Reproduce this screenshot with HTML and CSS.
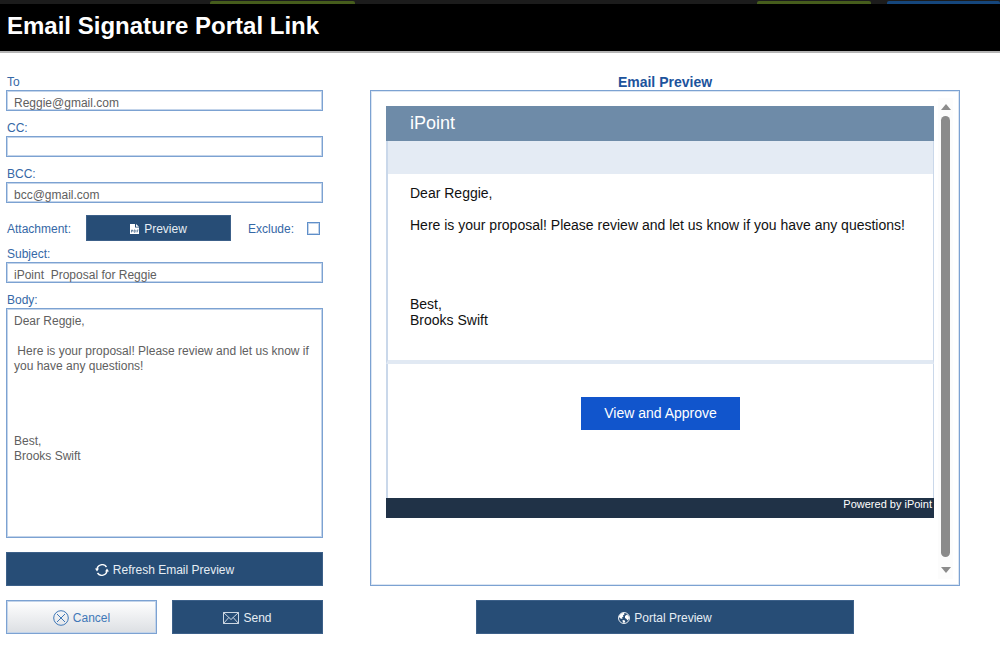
FILE: index.html
```html
<!DOCTYPE html>
<html lang="en">
<head>
    <meta charset="UTF-8">
    <meta name="viewport" content="width=device-width, initial-scale=1.0">
    <title>Email Signature Portal Link</title>

    <link rel="stylesheet" href="styles.css">
</head>
<body>
    <div class="tabs">
        <span class="tab green"></span>
        <span class="tab green"></span>
        <span class="tab blue"></span>
    </div>
    <header class="header">
        <h1>Email Signature Portal Link</h1>
    </header>

    <main class="container">
        <form class="form">
            <div class="field">
                <label for="to">To</label>
                <input type="text" id="to" value="Reggie@gmail.com">
            </div>
            <div class="field">
                <label for="cc">CC:</label>
                <input type="text" id="cc">
            </div>
            <div class="field">
                <label for="bcc">BCC:</label>
                <input type="text" id="bcc" value="bcc@gmail.com">
            </div>

            <div class="attachment">
                <label for="attachment">Attachment:</label>
                <button type="button" id="attachment" class="btn">
                    <svg class="icon-file" viewBox="0 0 10 12">
                        <path fill="#fff" d="M0 1h5v3.500h4V11H0z"/>
                        <path fill="#fff" d="M6 1l3 2.800H6z"/>
                        <path stroke="#274d76" stroke-width=".6" fill="none" d="M1.500 9.500V7h1v1.200h-1M4 7v2.200h1.200V7zM7 9.500V7h1.500M7 8.200h1"/>
                    </svg>
                    Preview
                </button>
                <label for="exclude">Exclude:</label>
                <input type="checkbox" id="exclude">
            </div>

            <div class="field">
                <label for="subject">Subject:</label>
                <input type="text" id="subject" value="iPoint  Proposal for Reggie">
            </div>
            <div class="field">
                <label for="body">Body:</label>
                <textarea id="body">Dear Reggie,

 Here is your proposal! Please review and let us know if you have any questions!




Best,
Brooks Swift</textarea>
            </div>

            <div class="actions">
                <button type="button" class="btn wide">
                    <svg class="icon-refresh" viewBox="0 0 14 12">
                        <path fill="none" stroke="#fff" stroke-width="1.400" d="M2 5.500A5.200 5.200 0 0 1 11.500 3M12 6.500A5.200 5.200 0 0 1 2.500 9"/>
                        <path fill="#fff" d="M0 4.500h4L2 7.500zM14 7.500h-4l2-3z"/>
                    </svg>
                    Refresh Email Preview
                </button>
                <button type="button" class="btn cancel">
                    <svg class="icon-cancel" viewBox="0 0 16 16">
                        <circle cx="8" cy="8" r="7.300" fill="none" stroke="#3f78b8"/>
                        <path stroke="#3f78b8" d="M4 4l8 8M12 4l-8 8"/>
                    </svg>
                    Cancel
                </button>
                <button type="submit" class="btn">
                    <svg class="icon-mail" viewBox="0 0 16 12">
                        <path fill="none" stroke="#dfe7ef" stroke-width=".9" d="M.5.5h15v11H.5zL8 7.500 15.500.5M.5 11.500l5.300-6M15.500 11.500l-5.300-6"/>
                    </svg>
                    Send
                </button>
            </div>
        </form>

        <section class="preview">
            <h2>Email Preview</h2>
            <div class="panel">
                <article class="email">
                    <div class="email-header">iPoint</div>
                    <div class="email-band"></div>
                    <div class="email-body">
                        <p>Dear Reggie,</p>
                        <p>Here is your proposal! Please review and let us know if you have any questions!</p>
                        <p class="sign">Best,<br>Brooks Swift</p>
                    </div>
                    <div class="email-action">
                        <a href="#">View and Approve</a>
                    </div>
                    <div class="email-footer">Powered by iPoint</div>
                </article>
                <div class="scroll">
                    <span class="arrow-up"></span>
                    <span class="thumb"></span>
                    <span class="arrow-down"></span>
                </div>
            </div>
            <button type="button" class="btn portal">
                <svg class="icon-globe" viewBox="0 0 12 12">
                    <circle cx="6" cy="6" r="5.500" fill="#274d76" stroke="#fff" stroke-width=".9"/>
                    <path fill="#fff" d="M1 4l2-2.500L6 .8l.5 1.700L5 3.200 5.500 4.500 4 5.500 4.500 7 2.500 6.500 1 5zM7 4l2-1.500 1.800 1.800.2 2.200-1.500 2L8.500 7 7 6zM4.500 8l2 .3.800 1.200L6 11.200 4.800 10z"/>
                </svg>
                Portal Preview
            </button>
        </section>
    </main>
</body>
</html>
```

FILE: styles.css
```css
* {
    margin: 0;
    padding: 0;
    box-sizing: border-box;
}

body {
    background: #fff;
    font-family: "Liberation Sans", Arial, sans-serif;
    font-size: 12px;
    line-height: 15px;
}

input,
textarea,
button {
    font: inherit;
}

/* top strip */
.tabs {
    display: grid;
    grid-template-columns: 145fr 402fr 114fr 16fr 113fr;
    height: 4px;
    padding: 1px 0 0 21%;
    background: #1c1c1c;
}

.tab {
    border-radius: 2px 2px 0 0;
}

.tab:nth-child(2) {
    grid-column: 3;
}

.tab:nth-child(3) {
    grid-column: 5;
}

.green {
    background: #465d1c;
}

.blue {
    background: #15467c;
}

.header {
    height: 49px;
    padding: 8px 7px;
    background: #000;
    border-bottom: 2px solid #b5b5b5;
}

.header h1 {
    color: #fff;
    font-size: 24px;
    line-height: 28px;
}

.container {
    display: grid;
    grid-template-columns: 317fr 590fr;
    column-gap: 47px;
    padding: 22px 40px 17px 6px;
}

/* left side */
.form {
    display: flex;
    flex-direction: column;
}

label {
    color: #3568a6;
}

.field {
    display: flex;
    flex-direction: column;
    margin-bottom: 10px;
}

.field label {
    padding-left: 1px;
}

.field input,
.field textarea {
    width: 100%;
    border: 1px solid #7ca2d2;
    box-shadow: inset 0 0 0 1px #c3d4ea;
    background: #fff;
    color: #606060;
    outline: none;
}

.field input {
    height: 21px;
    padding: 5px 7px 0;
}

.field textarea {
    display: block;
    height: 230px;
    padding: 5px 7px;
    resize: none;
}

.attachment {
    display: flex;
    align-items: center;
    margin: 2px 3px 6px 1px;
}

.attachment label {
    padding-top: 3px;
}

.attachment .btn {
    flex: 1;
    height: 26px;
    margin: 0 17px 0 15px;
}

.attachment input {
    appearance: none;
    width: 13px;
    height: 13px;
    border: 1px solid #5f8fc9;
    box-shadow: inset 0 0 0 1px #c3d4ea;
}

.attachment label:nth-of-type(2) {
    margin-right: 13px;
}

.btn {
    display: flex;
    align-items: center;
    justify-content: center;
    gap: 4px;
    height: 34px;
    padding-top: 2px;
    border: 1px solid #3c6089;
    background: #274d76;
    color: #e6edf4;
    cursor: pointer;
}

.btn svg {
    flex: none;
}

.actions {
    display: grid;
    grid-template-columns: 1fr 1fr;
    column-gap: 15px;
    row-gap: 14px;
    margin-top: 4px;
}

.wide {
    grid-column: 1 / 3;
}

.cancel {
    border: 1px solid #7ca2d2;
    box-shadow: inset 0 0 0 1px #c3d4ea;
    background: linear-gradient(#fff, #dcdfe3);
    color: #3f78b8;
}

.icon-file {
    width: 10px;
    height: 12px;
}

.icon-refresh {
    width: 14px;
    height: 12px;
}

.icon-cancel {
    width: 16px;
    height: 16px;
}

.icon-mail {
    width: 16px;
    height: 12px;
}

.icon-globe {
    width: 12px;
    height: 12px;
}

/* right side */
.preview {
    display: flex;
    flex-direction: column;
}

.preview h2 {
    color: #1c539c;
    font-size: 14px;
    line-height: 15px;
    text-align: center;
}

.panel {
    display: flex;
    flex: 1;
    gap: 4px;
    padding: 7px 6px 6px 14px;
    border: 1px solid #7ca2d2;
    box-shadow: inset 0 0 0 1px #dbe5f2;
}

.email {
    flex: 1;
    margin: 8px 0 0 1px;
    color: #111;
    font-size: 14px;
    line-height: 16px;
}

.email-header {
    height: 35px;
    padding-left: 24px;
    background: #6e8ba8;
    color: #fff;
    font-size: 18px;
    line-height: 34px;
}

.email-band {
    height: 33px;
    background: #e4ebf4;
}

.email-band,
.email-body,
.email-action {
    border-left: 2px solid #cad8ea;
    border-right: 1px solid #cad8ea;
}

.email-body {
    padding: 11px 22px 32px;
    border-bottom: 4px solid #e1e9f3;
}

.email-body p {
    margin-bottom: 16px;
}

.email-body .sign {
    margin-top: 63px;
    margin-bottom: 0;
}

.email-action {
    padding: 33px 0 68px;
    text-align: center;
}

.email-action a {
    display: inline-block;
    padding: 0 23px;
    background: #1155cc;
    color: #fff;
    line-height: 33px;
    text-decoration: none;
}

.email-footer {
    height: 20px;
    padding-right: 2px;
    background: #203247;
    color: #fff;
    font-size: 11px;
    line-height: 12px;
    text-align: right;
}

.scroll {
    display: flex;
    flex-direction: column;
    align-items: center;
    width: 15px;
    padding: 6px 0;
    background: #fcfcfc;
}

.thumb {
    flex: 1;
    width: 9px;
    margin: 6px 0 10px;
    border-radius: 5px;
    background: #8b8b8b;
}

.arrow-up,
.arrow-down {
    border: 5px solid transparent;
}

.arrow-up {
    border-top: 0;
    border-bottom: 6px solid #8b8b8b;
}

.arrow-down {
    border-bottom: 0;
    border-top: 6px solid #8b8b8b;
}

.portal {
    width: 64%;
    margin: 14px auto 0;
}
```
